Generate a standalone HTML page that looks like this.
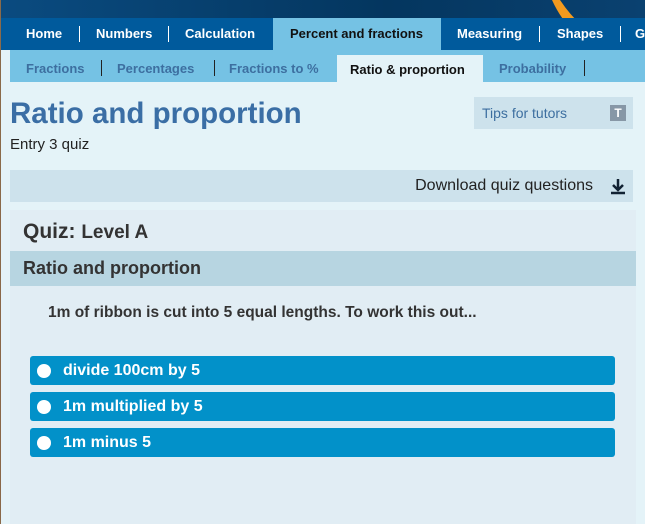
<!DOCTYPE html>
<html><head><style>
*{margin:0;padding:0;box-sizing:border-box}
body{width:645px;height:524px;overflow:hidden;background:#e4f3f8;font-family:"Liberation Sans",Arial,sans-serif;position:relative}
.abs{position:absolute}
.top{left:0;top:0;width:645px;height:18px;background:linear-gradient(90deg,#0a4b80,#04365f 60%,#0a4170)}
.nav{left:0;top:18px;width:645px;height:32px;background:#005a9c}
.nav span{position:absolute;top:0;height:32px;line-height:32px;color:#fff;font-weight:bold;font-size:13px}
.sep{position:absolute;width:1px;background:#fff}
.sub{left:10px;top:50px;width:635px;height:32px;background:#75c2e4}
.sub span{position:absolute;top:0;line-height:37px;color:#3d6fa0;font-weight:bold;font-size:13px}
.sep2{position:absolute;width:1px;height:16px;top:60px;background:#222}
.btn{position:absolute;left:30px;width:585px;height:29px;background:#0291c9;border-radius:3px;color:#fff;font-weight:bold;font-size:16px;line-height:29px}
.btn i{position:absolute;left:7px;top:8px;width:14px;height:14px;border-radius:50%;background:#fff}
.btn b{position:absolute;left:33px}
</style></head><body>
<div class="abs top"></div>
<svg class="abs" style="left:500px;top:0" width="145" height="60"><path d="M60 0 Q80 30 110 45 L145 40 L145 50 L110 52 Q70 40 52 0Z" fill="#f39a1e"/><path d="M110 52 L145 48 L145 52 Z" fill="#c0392b"/></svg>
<div class="abs nav">
<span style="left:26px">Home</span><div class="sep" style="left:79px;top:8px;height:16px"></div>
<span style="left:96px">Numbers</span><div class="sep" style="left:168px;top:8px;height:16px"></div>
<span style="left:185px">Calculation</span>
<div style="position:absolute;left:273px;top:0;width:168px;height:32px;background:#75c2e4"></div>
<span style="left:290px;color:#111">Percent and fractions</span>
<span style="left:457px">Measuring</span><div class="sep" style="left:539px;top:8px;height:16px"></div>
<span style="left:557px">Shapes</span><div class="sep" style="left:620px;top:8px;height:16px"></div>
<span style="left:635px">G</span>
</div>
<div class="abs sub">
<span style="left:16px">Fractions</span>
<span style="left:107px">Percentages</span>
<span style="left:219px">Fractions to %</span>
<div style="position:absolute;left:327px;top:5px;width:146px;height:27px;background:#e4f3f8"></div>
<span style="left:340px;color:#111;line-height:40px">Ratio &amp; proportion</span>
<span style="left:489px">Probability</span>
</div>
<div class="sep2" style="left:101px"></div><div class="sep2" style="left:214px"></div><div class="sep2" style="left:584px"></div>
<div class="abs" style="left:0;top:0;width:1px;height:524px;background:#8a6a4a"></div>
<div class="abs" style="left:10px;top:97px;font-size:29.5px;font-weight:bold;color:#3a6ea5">Ratio and proportion</div>
<div class="abs" style="left:10px;top:136px;font-size:15px;color:#222">Entry 3 quiz</div>
<div class="abs" style="left:474px;top:97px;width:159px;height:32px;background:#cde2ec;font-size:14px;color:#3d6fa0;line-height:32px;padding-left:8px">Tips for tutors<span style="position:absolute;left:136px;top:8px;width:16px;height:16px;background:#8797a6;color:#fff;font-weight:bold;font-size:12px;line-height:16px;text-align:center">T</span></div>
<div class="abs" style="left:10px;top:170px;width:623px;height:32px;background:#cde2ec;font-size:16px;color:#222;line-height:32px;text-align:right;padding-right:40px">Download quiz questions</div>
<svg class="abs" style="left:609px;top:177px" width="18" height="18"><path d="M9 2 V12 M4 8 L9 13 L14 8" stroke="#123" stroke-width="2.5" fill="none"/><path d="M2 16 H16" stroke="#123" stroke-width="2.5"/></svg>
<div class="abs" style="left:10px;top:210px;width:626px;height:314px;background:#e1edf4"></div>
<div class="abs" style="left:23px;top:220px;font-size:21px;font-weight:bold;color:#333">Quiz: <span style="font-size:19px">Level A</span></div>
<div class="abs" style="left:10px;top:251px;width:626px;height:35px;background:#b7d5e1;font-size:18px;font-weight:bold;color:#333;line-height:35px;padding-left:13px">Ratio and proportion</div>
<div class="abs" style="left:48px;top:304px;font-size:15.5px;font-weight:bold;color:#333">1m of ribbon is cut into 5 equal lengths. To work this out...</div>
<div class="btn" style="top:356px"><i></i><b>divide 100cm by 5</b></div>
<div class="btn" style="top:392px"><i></i><b>1m multiplied by 5</b></div>
<div class="btn" style="top:428px"><i></i><b>1m minus 5</b></div>
</body></html>
